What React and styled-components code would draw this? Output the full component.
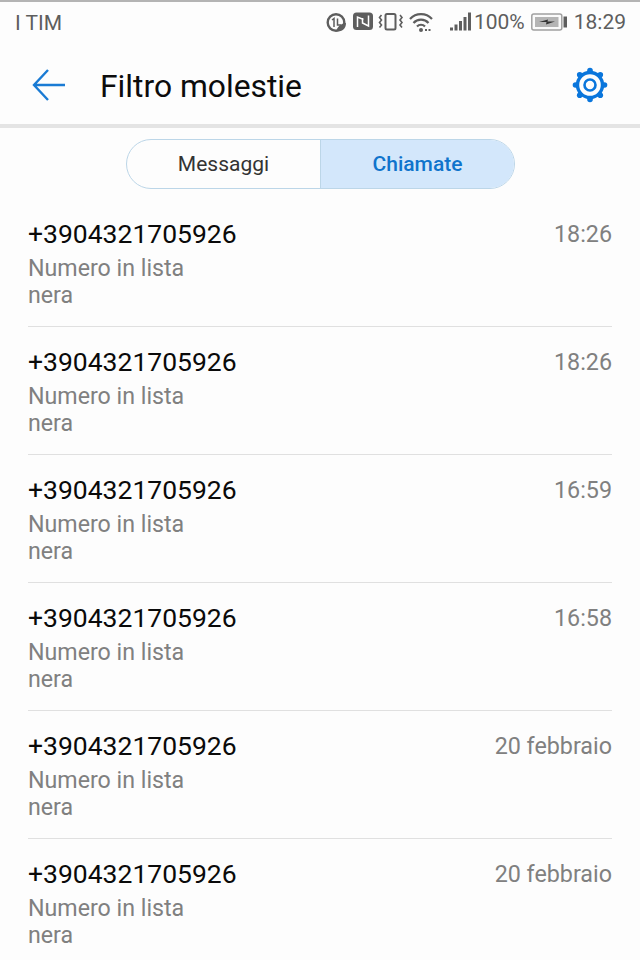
import React from 'react';
import styled, { createGlobalStyle } from 'styled-components';

const Global = createGlobalStyle`
  html, body {
    margin: 0;
    padding: 0;
    background: #fdfdfd;
    font-family: Roboto, "Liberation Sans", sans-serif;
  }
`;

const Page = styled.div`
  width: 640px;
  height: 960px;
  overflow: hidden;
  background: #fdfdfd;
`;

const StatusBar = styled.div`
  display: flex;
  align-items: center;
  justify-content: space-between;
  height: 43px;
  padding: 0 14px 0 15px;
  box-sizing: border-box;
  border-top: 2px solid #b4b4b4;
  color: #5e5e5e;
  font-size: 21px;
`;

const StatusRight = styled.div`
  display: flex;
  align-items: center;
`;

const StatusText = styled.span`
  margin-left: ${(p) => p.$left || 0}px;
  line-height: 1;
`;

const Glyph = styled.svg`
  display: block;
  margin-left: ${(p) => p.$left || 0}px;
`;

const Toolbar = styled.div`
  display: flex;
  align-items: center;
  height: 81px;
  padding: 3px 32px 0 32px;
  box-sizing: border-box;
`;

const Title = styled.div`
  flex: 1;
  margin: 2px 0 0 34px;
  color: #0c0c0c;
  font-size: 31.8px;
`;

const Divider = styled.div`
  height: 4px;
  background: #e4e4e4;
`;

const Tabs = styled.div`
  display: flex;
  width: 389px;
  height: 50px;
  box-sizing: border-box;
  margin: 11px 0 0 126px;
  border: 1px solid #bcd6e8;
  border-radius: 25px;
  overflow: hidden;
`;

const Tab = styled.div`
  display: flex;
  flex: 1;
  align-items: center;
  justify-content: center;
  font-size: 21px;
  font-weight: ${(p) => (p.$active ? 500 : 400)};
  color: ${(p) => (p.$active ? '#0f74cc' : '#333')};
  background: ${(p) => (p.$active ? '#d3e7fb' : 'transparent')};
  border-left: ${(p) => (p.$active ? '1px solid #bcd6e8' : '0')};
`;

const List = styled.div`
  margin: 10px 28px 0;
`;

const Row = styled.div`
  display: flex;
  justify-content: space-between;
  height: 128px;
  box-sizing: border-box;
  padding-top: 18px;
  border-bottom: 1px solid #e0e0e0;

  &:last-child {
    border-bottom: 0;
  }
`;

const Number = styled.div`
  color: #0a0a0a;
  font-size: 26.5px;
  line-height: 34px;
`;

const Note = styled.div`
  width: 200px;
  margin-top: 4px;
  color: #808080;
  font-size: 23.2px;
  line-height: 27px;
`;

const When = styled.div`
  color: #808080;
  font-size: 23.3px;
  line-height: 34px;
`;

const rows = ['18:26', '18:26', '16:59', '16:58', '20 febbraio', '20 febbraio'];

const App = () => (
  <Page>
    <Global />
    <StatusBar>
      <span>I TIM</span>
      <StatusRight>
        <Glyph width="20" height="22" viewBox="0 0 20 22">
          <circle cx="10" cy="10.500" r="8.300" fill="none" stroke="#5e5e5e" strokeWidth="2.400" />
          <path d="M6 8l2-1.500V15M11.500 6.500V13H15" fill="none" stroke="#5e5e5e" strokeWidth="1.500" />
          <path d="M10.500 19.500c0-4 4-8 9.500-8.500 0 5-3 8.500-9.500 8.500z" fill="#5e5e5e" />
        </Glyph>
        <Glyph $left={7} width="20" height="22" viewBox="0 0 20 22">
          <rect x="0" y="0.500" width="20" height="17.500" rx="3.500" fill="#5e5e5e" />
          <path d="M4.500 15V5l6 2.500M15.500 3.500v10.500l-6-3V6" fill="none" stroke="#fff" strokeWidth="1.500" />
        </Glyph>
        <Glyph $left={5} width="27" height="22" viewBox="0 0 27 22">
          <rect x="7.500" y="2" width="10" height="15.500" rx="1.500" fill="none" stroke="#5e5e5e" strokeWidth="2" />
          <path d="M3.500 3l-2 2.500 2 2.500-2 2.500 2 2.500-2 2.500M22 3l2 2.500-2 2.500 2 2.500-2 2.500 2 2.500" fill="none" stroke="#5e5e5e" strokeWidth="1.600" />
        </Glyph>
        <Glyph $left={4} width="24" height="22" viewBox="0 0 24 22">
          <path d="M1 7a15 15 0 0 1 22 0M4.500 11a10 10 0 0 1 15 0M8 14.500a5.500 5.500 0 0 1 8 0" fill="none" stroke="#5e5e5e" strokeWidth="2.200" />
          <circle cx="12" cy="18" r="2" fill="#5e5e5e" />
          <path d="M16 18h7" stroke="#5e5e5e" strokeWidth="2" strokeDasharray="2 1.500" />
        </Glyph>
        <Glyph $left={16} width="22" height="24" viewBox="0 0 22 24">
          <path d="M1 16.500h3v3H1zM5.500 13.500h3v6h-3zM10 10h3v9.500h-3zM14.500 6h3v13.500h-3zM19 1.500h3v18h-3z" fill="#5e5e5e" />
        </Glyph>
        <StatusText $left={3}>100%</StatusText>
        <Glyph $left={6} width="36" height="20" viewBox="0 0 36 20">
          <rect x="0.800" y="1" width="30" height="16" rx="2" fill="#fafafa" stroke="#a0a0a0" strokeWidth="1.500" />
          <rect x="4" y="4" width="23.500" height="10" fill="#b4b4b4" />
          <path d="M32.500 3.500h3.500v11h-3.500z" fill="#5e5e5e" />
          <path d="M8 9l9-2.500-.5 2H24L15 11.500l.5-2.500z" fill="#333" />
        </Glyph>
        <StatusText $left={7}>18:29</StatusText>
      </StatusRight>
    </StatusBar>
    <Toolbar>
      <Glyph width="34" height="32" viewBox="0 0 34 32">
        <path d="M33 16H2M16 1L2 16l14 15" fill="none" stroke="#1a7bd4" strokeWidth="2.400" />
      </Glyph>
      <Title>Filtro molestie</Title>
      <Glyph width="36" height="36" viewBox="0 0 36 36">
        <circle cx="18" cy="18" r="12.500" fill="none" stroke="#0a76dc" strokeWidth="3.400" />
        <circle cx="18" cy="18" r="5.500" fill="none" stroke="#0a76dc" strokeWidth="2.600" />
        <g fill="#0a76dc">
          <circle cx="18" cy="3.500" r="2.800" />
          <circle cx="18" cy="32.500" r="2.800" />
          <circle cx="3.500" cy="18" r="2.800" />
          <circle cx="32.500" cy="18" r="2.800" />
          <circle cx="7.700" cy="7.700" r="2.800" />
          <circle cx="28.300" cy="7.700" r="2.800" />
          <circle cx="7.700" cy="28.300" r="2.800" />
          <circle cx="28.300" cy="28.300" r="2.800" />
        </g>
      </Glyph>
    </Toolbar>
    <Divider />
    <Tabs>
      <Tab>Messaggi</Tab>
      <Tab $active>Chiamate</Tab>
    </Tabs>
    <List>
      {rows.map((time, i) => (
        <Row key={i}>
          <div>
            <Number>+3904321705926</Number>
            <Note>Numero in lista nera</Note>
          </div>
          <When>{time}</When>
        </Row>
      ))}
    </List>
  </Page>
);

export default App;
